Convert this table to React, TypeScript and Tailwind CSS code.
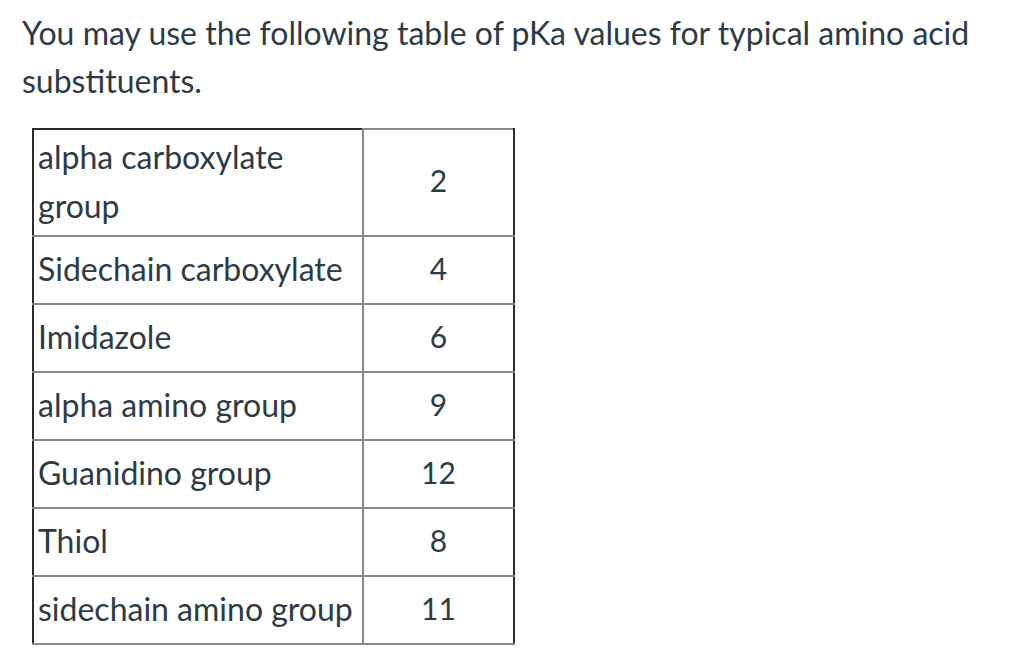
const rows: [string, string][] = [
  ['alpha carboxylate group', '2'],
  ['Sidechain carboxylate', '4'],
  ['Imidazole', '6'],
  ['alpha amino group', '9'],
  ['Guanidino group', '12'],
  ['Thiol', '8'],
  ['sidechain amino group', '11'],
];

export default function App() {
  return (
    <div className="min-h-screen bg-white text-[#2d3b45]" style={{ fontFamily: 'Lato, "Liberation Sans", sans-serif' }}>
      <div className="pl-[22px] pr-4 pt-[9px]">
        <p className="text-[32px] leading-[48px] max-w-[990px]">
          You may use the following table of pKa values for typical amino acid substituents.
        </p>
        <table className="mt-[23px] ml-[10px] border-collapse border-2 border-[#2b2b2b] leading-[49px]">
          <tbody>
            {rows.map(([name, value], i) => (
              <tr key={name} className={i === 0 ? 'h-[107px]' : 'h-[68px]'}>
                <td className="w-[330px] border-2 border-[#2b2b2b] border-r-[#888] border-b-[#888] pl-1 pr-2 pb-1 align-middle text-[32px]">
                  {i === 0 ? (
                    <>
                      alpha carboxylate
                      <br />
                      group
                    </>
                  ) : (
                    name
                  )}
                </td>
                <td className="w-[151px] border-2 border-[#888] border-r-[#2b2b2b] pb-1 text-center align-middle text-[30px]">{value}</td>
              </tr>
            ))}
          </tbody>
        </table>
      </div>
    </div>
  );
}
